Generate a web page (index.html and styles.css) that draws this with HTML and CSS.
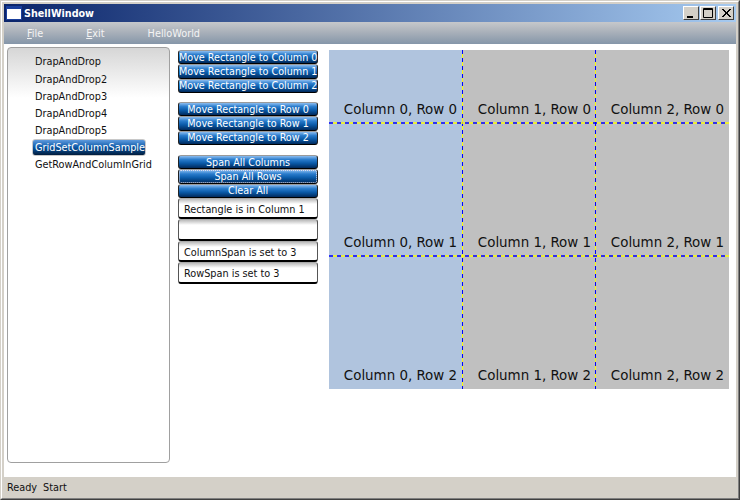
FILE: index.html
```html
<!DOCTYPE html>
<html lang="en">
<head>
    <meta charset="UTF-8">
    <title>ShellWindow</title>
    <link rel="stylesheet" href="styles.css">
</head>
<body>
    <div class="frame">
        <div class="frame-inner">
            <div class="titlebar">
                <svg class="app-icon" width="16" height="14" viewBox="0 0 16 14">
                    <rect width="16" height="14" fill="#1a3f9c"/>
                    <rect x="1" y="3" width="14" height="10" fill="#fff"/>
                </svg>
                <span class="title">ShellWindow</span>
                <div class="caption-buttons">
                    <div class="caption-btn">
                        <svg width="14" height="12" viewBox="0 0 14 12"><rect x="3" y="9" width="6" height="2" fill="#000"/></svg>
                    </div>
                    <div class="caption-btn">
                        <svg width="14" height="12" viewBox="0 0 14 12"><path d="M2.5 1.5h9v9h-9z M2 2.5h10" fill="none" stroke="#000"/></svg>
                    </div>
                    <div class="caption-btn close">
                        <svg width="14" height="12" viewBox="0 0 14 12"><path d="M3 2l8 8M4 2l8 8M11 2l-8 8M12 2l-8 8" stroke="#000" fill="none"/></svg>
                    </div>
                </div>
            </div>

            <div class="menu">
                <span class="menu-item"><u>F</u>ile</span>
                <span class="menu-item"><u>E</u>xit</span>
                <span class="menu-item">HelloWorld</span>
            </div>

            <div class="main">
                <div class="sidebar">
                    <div class="nav-item first">DrapAndDrop</div>
                    <div class="nav-item">DrapAndDrop2</div>
                    <div class="nav-item">DrapAndDrop3</div>
                    <div class="nav-item">DrapAndDrop4</div>
                    <div class="nav-item">DrapAndDrop5</div>
                    <div class="nav-item selected">GridSetColumnSample</div>
                    <div class="nav-item">GetRowAndColumInGrid</div>
                </div>

                <div class="controls">
                    <div class="btn-group">
                        <button class="blue-btn">Move Rectangle to Column 0</button>
                        <button class="blue-btn">Move Rectangle to Column 1</button>
                        <button class="blue-btn">Move Rectangle to Column 2</button>
                    </div>
                    <div class="btn-group">
                        <button class="blue-btn">Move Rectangle to Row 0</button>
                        <button class="blue-btn">Move Rectangle to Row 1</button>
                        <button class="blue-btn">Move Rectangle to Row 2</button>
                    </div>
                    <div class="btn-group">
                        <button class="blue-btn">Span All Columns</button>
                        <button class="blue-btn focused">Span All Rows</button>
                        <button class="blue-btn">Clear All</button>
                    </div>
                    <div class="text-group">
                        <div class="text-box">Rectangle is in Column 1</div>
                        <div class="text-box"></div>
                        <div class="text-box">ColumnSpan is set to 3</div>
                        <div class="text-box">RowSpan is set to 3</div>
                    </div>
                </div>

                <div class="grid">
                    <div class="cell first-col">Column 0, Row 0</div>
                    <div class="cell">Column 1, Row 0</div>
                    <div class="cell">Column 2, Row 0</div>
                    <div class="cell first-col">Column 0, Row 1</div>
                    <div class="cell">Column 1, Row 1</div>
                    <div class="cell">Column 2, Row 1</div>
                    <div class="cell first-col">Column 0, Row 2</div>
                    <div class="cell">Column 1, Row 2</div>
                    <div class="cell">Column 2, Row 2</div>
                    <div class="line-v col1"></div>
                    <div class="line-v col2"></div>
                    <div class="line-h row1"></div>
                    <div class="line-h row2"></div>
                </div>
            </div>

            <div class="statusbar">
                <span>Ready</span>
                <span>Start</span>
            </div>
        </div>
    </div>
</body>
</html>
```

FILE: styles.css
```css
html, body {
    margin: 0;
    height: 100%;
}
body {
    font-family: "DejaVu Sans Condensed", "DejaVu Sans", sans-serif;
    font-stretch: condensed;
    font-size: 10.8px;
    color: #111;
    background: #d4d0c8;
}
.frame {
    box-sizing: border-box;
    height: 500px;
    border: 1px solid;
    border-color: #d4d0c8 #404040 #404040 #d4d0c8;
}
.frame-inner {
    box-sizing: border-box;
    height: 498px;
    border: 1px solid;
    border-color: #fff #808080 #808080 #fff;
    padding: 2px;
    background: #d4d0c8;
    display: flex;
    flex-direction: column;
}
.titlebar {
    height: 18px;
    flex: none;
    display: flex;
    align-items: center;
    padding: 0 2px;
    background: linear-gradient(90deg, #0a246a, #a6caf0);
}
.app-icon {
    flex: none;
}
.title {
    margin-left: 2px;
    color: #fff;
    font-weight: bold;
    font-size: 10.7px;
}
.caption-buttons {
    margin-left: auto;
    display: flex;
    gap: 1px;
}
.caption-btn {
    box-sizing: border-box;
    width: 16px;
    height: 14px;
    background: #d4d0c8;
    border: 1px solid;
    border-color: #fff #404040 #404040 #fff;
}
.caption-btn svg {
    display: block;
}
.caption-btn.close {
    margin-left: 1px;
}
.menu {
    height: 22px;
    flex: none;
    display: flex;
    align-items: center;
    gap: 43px;
    padding-left: 23px;
    color: #f4f4f4;
    background: linear-gradient(180deg, #c6c8cb 0%, #aab1ba 45%, #8596a9 100%);
}
.main {
    flex: 1;
    min-height: 0;
    display: flex;
    align-items: flex-start;
    background: #fff;
    padding: 3px 7px 14px 3px;
}
.sidebar {
    box-sizing: border-box;
    width: 163px;
    height: 416px;
    flex: none;
    padding: 5px 0 0 24px;
    border: 1px solid #a0a0a0;
    border-radius: 4px;
    background: linear-gradient(180deg, #d6d6d6 0, #fff 50px);
}
.nav-item {
    height: 17px;
    line-height: 17px;
    padding-left: 3px;
}
.nav-item.first {
    height: 18px;
}
.nav-item.selected {
    width: 114px;
    box-sizing: border-box;
    padding-left: 2px;
    color: #fff;
    border-radius: 3px;
    border: 1px solid #c8c8c8;
    line-height: 15px;
    background: linear-gradient(180deg, #5d9ade 0%, #0a56a4 50%, #011c3c 100%);
}
.controls {
    width: 140px;
    flex: none;
    margin: 3px 11px 0 8px;
    display: flex;
    flex-direction: column;
    gap: 9px;
}
.btn-group {
    display: flex;
    flex-direction: column;
}
.btn-group + .btn-group + .btn-group {
    margin-top: 1px;
}
.blue-btn {
    display: block;
    box-sizing: border-box;
    width: 140px;
    height: 14.33px;
    padding: 0;
    border: 1px solid #222;
    border-top-color: #9a9a9a;
    border-bottom-color: #000;
    border-radius: 3px;
    font: 10.7px/11px "DejaVu Sans Condensed", "DejaVu Sans", sans-serif;
    font-stretch: condensed;
    color: #fff;
    white-space: nowrap;
    background: linear-gradient(180deg, #8cbdf0 0%, #2a7ccc 30%, #0a5aa8 60%, #012a5c 100%);
}
.blue-btn.focused {
    outline: 1px dotted #dde;
    outline-offset: -2px;
}
.text-group {
    margin-top: -9px;
    display: flex;
    flex-direction: column;
}
.text-box {
    box-sizing: border-box;
    height: 21.5px;
    line-height: 21px;
    padding-left: 5px;
    border: 1px solid #555;
    border-top-color: #aaa;
    border-bottom: 2px solid #000;
    border-radius: 3px;
    background: linear-gradient(180deg, #bbb 0, #fff 5px);
}
.grid {
    position: relative;
    width: 400px;
    height: 339px;
    margin-top: 3px;
    flex: none;
    display: grid;
    grid-template-columns: 133px 134px 133px;
    grid-template-rows: 73px 133px 133px;
}
.cell {
    display: flex;
    align-items: flex-end;
    justify-content: flex-end;
    padding: 0 5px 4px 0;
    font-size: 14.9px;
    line-height: 19px;
    background: #c0c0c0;
}
.first-col {
    background: #b0c4de;
}
.line-v, .line-h {
    position: absolute;
}
.line-v {
    top: 0;
    bottom: 0;
    width: 1px;
    background: repeating-linear-gradient(180deg, #0000ff 0 4px, #ffff00 4px 8px);
}
.line-h {
    left: 0;
    right: 0;
    height: 2px;
    opacity: 0.75;
    background: repeating-linear-gradient(90deg, #0000ff 0 4px, #ffff00 4px 8px);
}
.col1 { left: 133px; }
.col2 { left: 266px; }
.row1 { top: 72px; }
.row2 { top: 205px; }
.statusbar {
    height: 19px;
    flex: none;
    display: flex;
    align-items: center;
    gap: 6px;
    padding: 1px 0 0 3px;
    box-sizing: border-box;
    background: #d4d0c8;
}
```
